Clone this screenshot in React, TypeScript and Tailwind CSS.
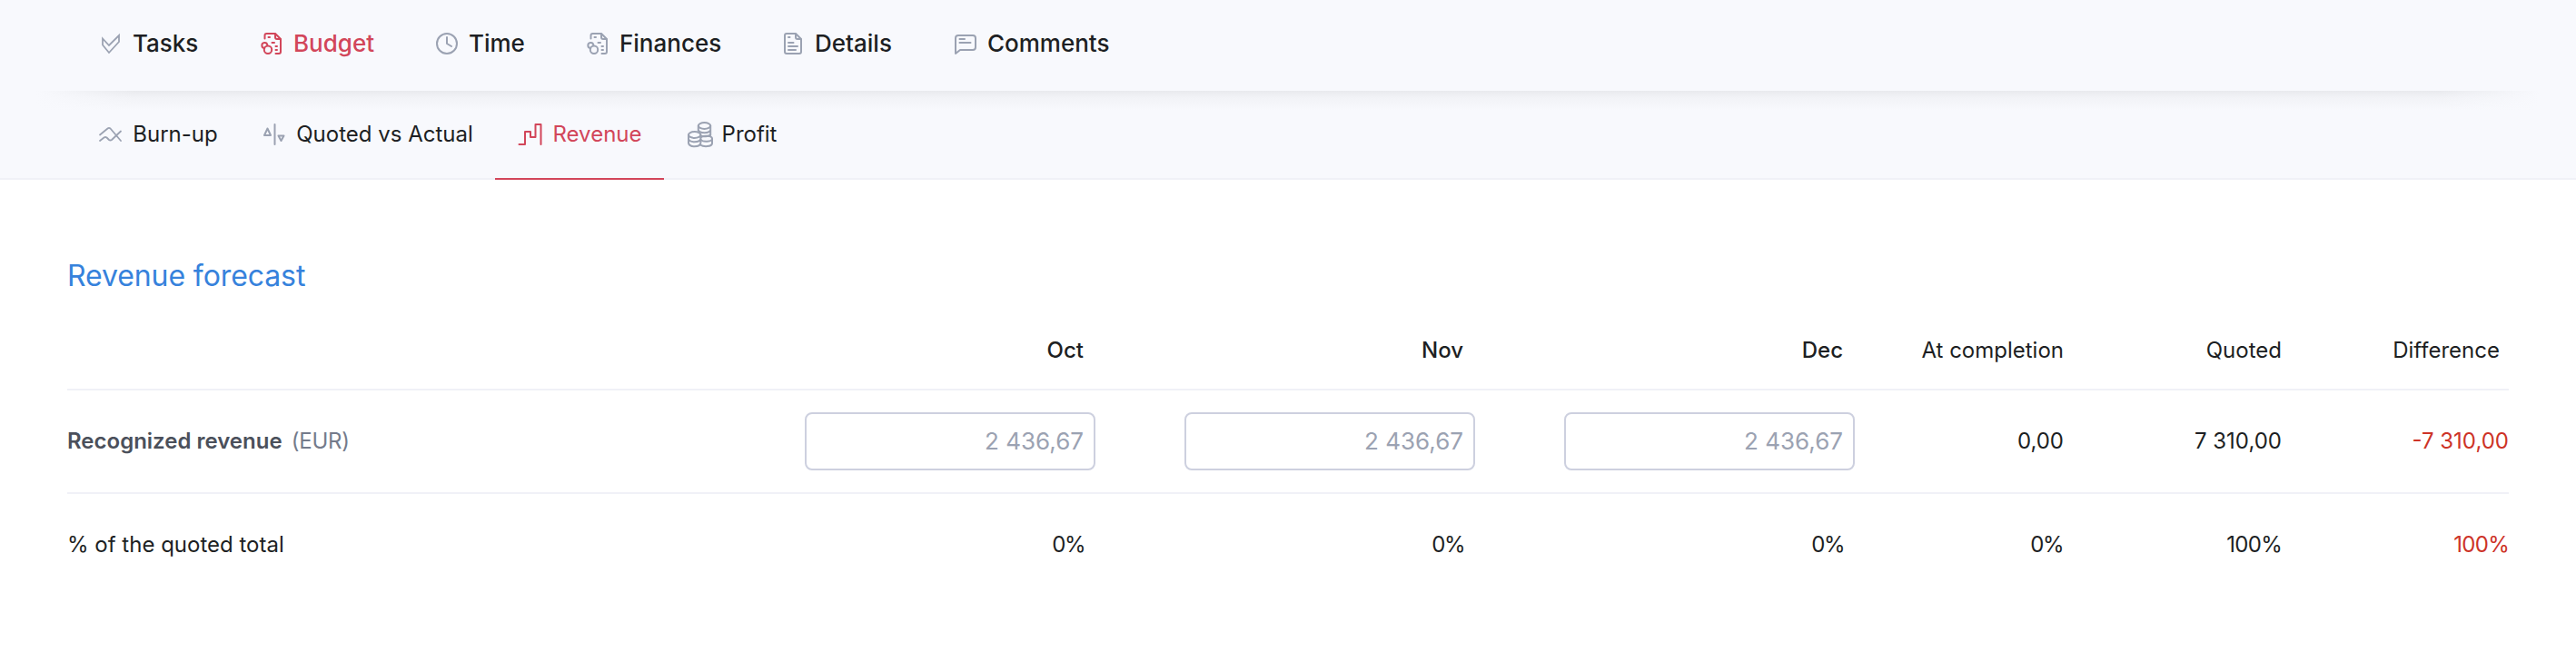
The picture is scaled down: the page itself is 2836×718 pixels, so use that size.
import { ReactNode, SVGProps, useState } from 'react';

function Icon({ children, ...props }: SVGProps<SVGSVGElement> & { children: ReactNode }) {
  return (
    <svg
      width="28"
      height="28"
      viewBox="0 0 28 28"
      fill="none"
      stroke="currentColor"
      strokeWidth="2"
      strokeLinecap="round"
      strokeLinejoin="round"
      className="shrink-0"
      {...props}
    >
      {children}
    </svg>
  );
}

const TasksIcon = () => (
  <Icon strokeLinejoin="miter" strokeWidth="1.8">
    <path d="M5 8.500V15.500L12 24l11-12V5L12 16z" />
  </Icon>
);

const InvoiceIcon = () => (
  <Icon>
    <path d="M6.500 8.500V5a2 2 0 0 1 2-2H18l6 6v14a2 2 0 0 1-2 2h-3.500" />
    <path d="M18 3.500V7a2 2 0 0 0 2 2h3.500" />
    <path d="M10.500 7h1.500M14.500 13H17M18.500 17h1.500M18.500 21h1.500" />
    <path d="M6.300 19a3 3 0 1 1 3-3.500" />
    <circle cx="10" cy="20.800" r="4.200" />
  </Icon>
);

const ClockIcon = () => (
  <Icon>
    <circle cx="14" cy="14" r="11" />
    <path d="M14 7v7l5 3" />
  </Icon>
);

const DetailsIcon = () => (
  <Icon>
    <path d="M7 3h10l6 6v14a2 2 0 0 1-2 2H7a2 2 0 0 1-2-2V5a2 2 0 0 1 2-2z" />
    <path d="M17 3.500V7a2 2 0 0 0 2 2h3.500" />
    <path d="M9 7h1.500M9 13h5.500M9 17h10M9 21h8" />
  </Icon>
);

const CommentsIcon = () => (
  <Icon>
    <path d="M3 25V8a3 3 0 0 1 3-3h16a3 3 0 0 1 3 3v10a3 3 0 0 1-3 3H8l-5 4z" />
    <path d="M7.500 9H13M7.500 13H19.500" />
  </Icon>
);

const BurnUpIcon = () => (
  <Icon strokeWidth="1.8">
    <path d="M2 14.500L10.500 7.500q1.500-1.200 3 0L25 21" />
    <path d="M2 21l4.500-3.500q1.500-1 3 0l2.500 2.500q1.500 1 3 0l10-9.500" />
  </Icon>
);

const QuotedIcon = () => (
  <Icon>
    <path d="M14.500 3v22" />
    <path d="M6.500 7.500L3 15h7L6.500 7.500zM21.500 21L18.500 15.500h6l-3 5.500z" />
  </Icon>
);

const RevenueIcon = () => (
  <Icon>
    <path d="M1.500 25H8V11h6v6h5.500V3h6v22" />
  </Icon>
);

const ProfitIcon = () => (
  <Icon width="32" height="32" viewBox="0 0 32 32">
    <ellipse cx="20.500" cy="6.500" rx="6.700" ry="3.500" />
    <path d="M13.800 6.500V12M27.200 6.500V17M13.800 11c1 4.200 12.400 4.200 13.400 0M17.500 18c4 .8 8.500 0 9.700-2" />
    <ellipse cx="9.700" cy="16.500" rx="6.700" ry="3.500" />
    <path d="M3 16.500v9c1 5 12.400 5 13.400 0v-9M3 21c1 4.200 12.400 4.200 13.400 0" />
    <path d="M16.400 19.500c2-2.500 12.600-2.500 12.600 1.200s-10.600 4-12.600 1" />
    <path d="M29 21v5c-.5 3.800-9.500 4-13 1.500" />
  </Icon>
);

const mainTabs = [
  { label: 'Tasks', icon: TasksIcon, className: 'w-[177px]' },
  { label: 'Budget', icon: InvoiceIcon, className: 'w-[193px]' },
  { label: 'Time', icon: ClockIcon, className: 'w-[166px]' },
  { label: 'Finances', icon: InvoiceIcon, className: 'w-[215px]' },
  { label: 'Details', icon: DetailsIcon, className: 'w-[190px]' },
  { label: 'Comments', icon: CommentsIcon, className: '' }
];

const subTabs = [
  { label: 'Burn-up', icon: BurnUpIcon, className: 'w-[180px] gap-[10px]' },
  { label: 'Quoted vs Actual', icon: QuotedIcon, className: 'w-[281px] gap-[10px]' },
  { label: 'Revenue', icon: RevenueIcon, className: 'w-[186px] gap-[11px]' },
  { label: 'Profit', icon: ProfitIcon, className: 'w-[148px] gap-2' }
];

const months = ['Oct', 'Nov', 'Dec'];
const gridCols = 'grid grid-cols-[714px_418px_418px_418px_230px_240px_250px]';

export default function App() {
  const [activeTab, setActiveTab] = useState('Budget');
  const [activeSubTab, setActiveSubTab] = useState('Revenue');
  const [revenue, setRevenue] = useState<Record<string, string>>({});

  return (
    <div className="h-[718px] overflow-hidden bg-white font-['Inter',sans-serif] text-2xl text-[#1d1f23]">
      <header className="h-[198px] border-b-2 border-[#f0f1f7] bg-[#f8f9fd]">
        <nav className="flex h-[100px] items-center pl-[108px] pb-1 text-[26px] font-medium">
          {mainTabs.map(({ label, icon: TabIcon, className }) => (
            <button
              key={label}
              onClick={() => setActiveTab(label)}
              className={`flex items-center gap-[10px] ${className} ${activeTab === label ? 'text-[#d2465a]' : ''}`}
            >
              <span className={activeTab === label ? '' : 'text-[#9ba2b2]'}>
                <TabIcon />
              </span>
              {label}
            </button>
          ))}
        </nav>

        {/* soft shadow under the main tabs, fading out at both ends */}
        <div className="h-[96px] bg-[linear-gradient(90deg,#f8f9fd_40px,transparent_150px,transparent_calc(100%_-_150px),#f8f9fd_calc(100%_-_40px)),linear-gradient(#e9eaee,#f2f3f7_8px,#f8f9fd_22px)]">
          <nav className="flex h-[98px] pl-[84px]">
            {subTabs.map(({ label, icon: TabIcon, className }) => (
              <button
                key={label}
                onClick={() => setActiveSubTab(label)}
                className={`flex items-center justify-center border-b-2 ${className} ${
                  activeSubTab === label ? 'border-[#d2465a] text-[#d2465a]' : 'border-transparent'
                }`}
              >
                <span className={activeSubTab === label ? '' : 'text-[#9ba2b2]'}>
                  <TabIcon />
                </span>
                {label}
              </button>
            ))}
          </nav>
        </div>
      </header>

      <main className="px-[74px] pt-[82px]">
        <h1 className="h-[68px] text-[32px] leading-[48px] tracking-[-0.1px] text-[#3682dc]">Revenue forecast</h1>

        <div className={`${gridCols} h-[82px] items-center border-b-2 border-[#f0f1f7] pb-[5px] text-right`}>
          <span />
          {months.map((month) => (
            <span key={month} className="pr-[13px] font-medium">
              {month}
            </span>
          ))}
          <span>At completion</span>
          <span>Quoted</span>
          <span className="pr-[10px]">Difference</span>
        </div>

        <div className={`${gridCols} h-[114px] items-center border-b-2 border-[#f0f1f7] text-right`}>
          <div className="text-left">
            <span className="font-semibold text-[#4b505b]">Recognized revenue</span>
            <span className="ml-[10px] tracking-[-0.2px] text-[#747b8b]">(EUR)</span>
          </div>
          {months.map((month) => (
            <input
              key={month}
              value={revenue[month] ?? ''}
              placeholder="2 436,67"
              onChange={(e) => setRevenue({ ...revenue, [month]: e.target.value })}
              className="h-16 w-80 justify-self-end rounded-lg border-2 border-[#cdd0df] px-[11px] pb-0.5 text-right text-[26px] placeholder:text-[#9ba2b2]"
            />
          ))}
          <span>0,00</span>
          <span>7 310,00</span>
          <span className="text-[#cd3327]">-7 310,00</span>
        </div>

        <div className={`${gridCols} h-[112px] items-center text-right`}>
          <span className="text-left">% of the quoted total</span>
          {months.map((month) => (
            <span key={month} className="pr-[12px] tracking-[-1.5px]">
              0%
            </span>
          ))}
          <span className="pr-px tracking-[-1.5px]">0%</span>
          <span className="tracking-[-0.7px]">100%</span>
          <span className="tracking-[-0.7px] text-[#cd3327]">100%</span>
        </div>
      </main>
    </div>
  );
}
